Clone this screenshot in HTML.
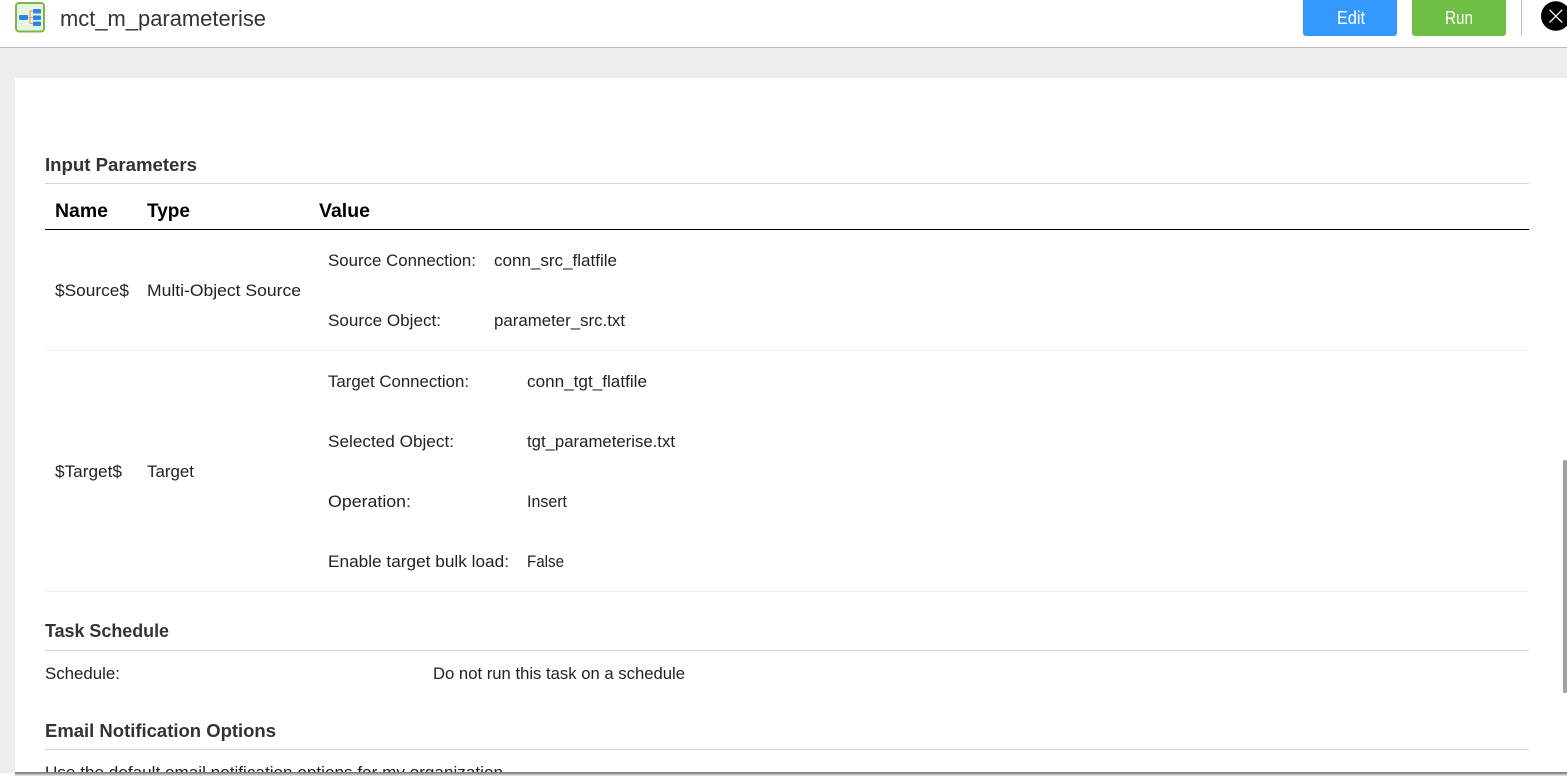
<!DOCTYPE html>
<html>
<head>
<meta charset="utf-8">
<title>mct_m_parameterise</title>
<style>
html,body{margin:0;padding:0;width:1567px;height:779px;overflow:hidden;background:#fff}
svg{display:block;position:absolute;left:0;top:0}
text{font-family:"Liberation Sans",sans-serif;font-size:17px;fill:#222}
.h{font-weight:700;font-size:18px;fill:#333}
.t{font-weight:700;font-size:19px;fill:#000}
</style>
</head>
<body>
<svg width="1567" height="779" viewBox="0 0 1567 779" xmlns="http://www.w3.org/2000/svg">
<defs>
<linearGradient id="sh" x1="0" y1="0" x2="0" y2="1"><stop offset="0" stop-color="#6f6f6f"/><stop offset="0.5" stop-color="#a8a8a8"/><stop offset="1" stop-color="#f0f0f0"/></linearGradient>
</defs>
<rect x="0" y="0" width="1567" height="779" fill="#fff"/>
<rect x="0" y="47" width="1567" height="726" fill="#ededed"/>
<rect x="0" y="47" width="1567" height="1" fill="#bbb"/>
<rect x="15" y="78" width="1552" height="694" fill="#fff"/>

<!-- header icon -->
<rect x="16" y="3" width="28" height="28.5" rx="3" fill="#e9f4df" stroke="#79b74b" stroke-width="2"/>
<path d="M27 17.5H30M30 11V23.5M30 11H33M30 17.5H33M30 23.5H33" stroke="#f0a070" stroke-width="1.2" fill="none"/>
<rect x="19" y="15" width="9" height="5" rx="1" fill="#2a86e8"/>
<rect x="33" y="9" width="8" height="4.5" rx="1" fill="#2a86e8"/>
<rect x="33" y="15.5" width="8" height="4.5" rx="1" fill="#2a86e8"/>
<rect x="33" y="21.5" width="8" height="4.5" rx="1" fill="#2a86e8"/>
<text x="60" y="26" style="font-size:22px;fill:#333" textLength="206" lengthAdjust="spacingAndGlyphs">mct_m_parameterise</text>

<!-- header buttons -->
<path d="M1303 0H1397V33a3 3 0 0 1-3 3H1306a3 3 0 0 1-3-3Z" fill="#3399ff"/>
<text x="1337" y="24" style="font-size:18.5px;fill:#fff" textLength="28" lengthAdjust="spacingAndGlyphs">Edit</text>
<path d="M1412 0H1506V33a3 3 0 0 1-3 3H1415a3 3 0 0 1-3-3Z" fill="#6fbe45"/>
<text x="1445" y="24" style="font-size:18.5px;fill:#fff" textLength="28" lengthAdjust="spacingAndGlyphs">Run</text>
<rect x="1521" y="0" width="1" height="36" fill="#bbb"/>
<circle cx="1555.8" cy="16" r="14.8" fill="#000"/>
<path d="M1549.5 9.8L1562.2 22.4M1562.2 9.8L1549.5 22.4" stroke="#fff" stroke-width="1.3" fill="none"/>

<!-- section lines -->
<rect x="45" y="183" width="1484" height="1" fill="#d4d4d4"/>
<rect x="45" y="229" width="1484" height="1" fill="#000"/>
<rect x="45" y="350" width="1484" height="1" fill="#f0f0f0"/>
<rect x="45" y="591" width="1484" height="1" fill="#f0f0f0"/>
<rect x="45" y="650" width="1484" height="1" fill="#d4d4d4"/>
<rect x="45" y="749" width="1484" height="1" fill="#d4d4d4"/>

<!-- input parameters -->
<text class="h" x="45" y="171" textLength="152" lengthAdjust="spacingAndGlyphs">Input Parameters</text>
<text class="t" x="55" y="217" textLength="53" lengthAdjust="spacingAndGlyphs">Name</text>
<text class="t" x="147" y="217" textLength="43" lengthAdjust="spacingAndGlyphs">Type</text>
<text class="t" x="319" y="217" textLength="51" lengthAdjust="spacingAndGlyphs">Value</text>

<text x="55" y="296" textLength="74" lengthAdjust="spacingAndGlyphs">$Source$</text>
<text x="147" y="296" textLength="154" lengthAdjust="spacingAndGlyphs">Multi-Object Source</text>
<text x="328" y="266" textLength="148" lengthAdjust="spacingAndGlyphs">Source Connection:</text>
<text x="494" y="266" textLength="123" lengthAdjust="spacingAndGlyphs">conn_src_flatfile</text>
<text x="328" y="326" textLength="113" lengthAdjust="spacingAndGlyphs">Source Object:</text>
<text x="494" y="326" textLength="131" lengthAdjust="spacingAndGlyphs">parameter_src.txt</text>

<text x="55" y="477" textLength="67" lengthAdjust="spacingAndGlyphs">$Target$</text>
<text x="147" y="477" textLength="47" lengthAdjust="spacingAndGlyphs">Target</text>
<text x="328" y="387" textLength="141" lengthAdjust="spacingAndGlyphs">Target Connection:</text>
<text x="527" y="387" textLength="120" lengthAdjust="spacingAndGlyphs">conn_tgt_flatfile</text>
<text x="328" y="447" textLength="126" lengthAdjust="spacingAndGlyphs">Selected Object:</text>
<text x="527" y="447" textLength="148" lengthAdjust="spacingAndGlyphs">tgt_parameterise.txt</text>
<text x="328" y="507" textLength="83" lengthAdjust="spacingAndGlyphs">Operation:</text>
<text x="527" y="507" textLength="40" lengthAdjust="spacingAndGlyphs">Insert</text>
<text x="328" y="567" textLength="181" lengthAdjust="spacingAndGlyphs">Enable target bulk load:</text>
<text x="527" y="567" textLength="37" lengthAdjust="spacingAndGlyphs">False</text>

<!-- task schedule -->
<text class="h" x="45" y="637" textLength="124" lengthAdjust="spacingAndGlyphs">Task Schedule</text>
<text x="45" y="679" textLength="75" lengthAdjust="spacingAndGlyphs">Schedule:</text>
<text x="433" y="679" textLength="252" lengthAdjust="spacingAndGlyphs">Do not run this task on a schedule</text>

<!-- email -->
<text class="h" x="45" y="737" textLength="231" lengthAdjust="spacingAndGlyphs">Email Notification Options</text>
<text x="45" y="778" textLength="458" lengthAdjust="spacingAndGlyphs">Use the default email notification options for my organization</text>

<!-- bottom clipping -->
<rect x="0" y="772" width="1567" height="7" fill="#fff"/>
<rect x="0" y="772" width="15" height="1" fill="#ededed"/>
<rect x="15" y="772" width="1552" height="4" fill="url(#sh)"/>

<!-- scrollbar -->
<rect x="1563" y="460" width="4" height="233" rx="1.5" fill="#a0a0a0"/>
</svg>
</body>
</html>
